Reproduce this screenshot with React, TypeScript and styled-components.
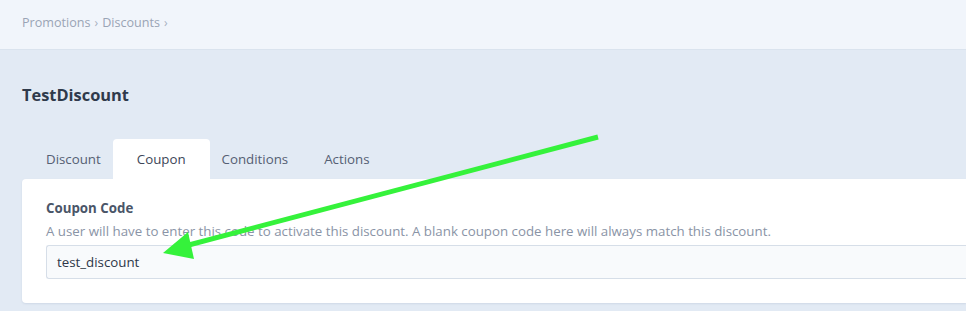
import React from "react";
import styled, { createGlobalStyle } from "styled-components";

const Global = createGlobalStyle`
  html, body { margin: 0; padding: 0; }
  body {
    font-family: "Open Sans", "Liberation Sans", sans-serif;
    background: #e2eaf4;
    overflow: hidden;
  }
`;

const Page = styled.div`
  position: relative;
  width: 966px;
  height: 311px;
  overflow: hidden;
  background: #e2eaf4;
`;

const Header = styled.header`
  height: 50px;
  box-sizing: border-box;
  background: #f1f5fb;
  border-bottom: 1px solid #dae3ee;
  display: flex;
  align-items: center;
  padding: 0 22px 4px;
`;

const Crumb = styled.span`
  font-size: 12.6px;
  color: #9aa4b5;
  display: inline-flex;
  align-items: center;
`;

const Sep = styled.span`
  font-size: 12px;
  color: #a7b0bf;
  margin: 0 4px;
`;

const Main = styled.main`
  padding: 33px 0 0 22px;
`;

const Title = styled.h1`
  margin: 0;
  font-size: 16.4px;
  font-weight: 700;
  color: #2f3a4b;
  line-height: 24px;
`;

const Tabs = styled.div`
  display: flex;
  margin-top: 32px;
  height: 40px;
`;

const Tab = styled.div<{ $active?: boolean; $first?: boolean }>`
  padding: 0 ${(p) => (p.$active ? "24px" : "18px")} 1px;
  margin: 0 ${(p) => (p.$active ? "-6px" : "0")} 0 ${(p) => (p.$first ? "6px" : p.$active ? "-6px" : "0")};
  display: flex;
  align-items: center;
  font-size: 13.3px;
  color: ${(p) => (p.$active ? "#3c4658" : "#556073")};
  background: ${(p) => (p.$active ? "#ffffff" : "transparent")};
  border-radius: 4px 4px 0 0;
  position: relative;
`;

const Card = styled.section`
  background: #ffffff;
  border-radius: 4px 0 0 4px;
  padding: 20px 0 24px 24px;
  box-shadow: 0 1px 2px rgba(120, 140, 170, 0.18);
`;

const Label = styled.div`
  font-size: 13.3px;
  font-weight: 700;
  color: #4a5568;
  line-height: 19px;
`;

const Help = styled.div`
  font-size: 13.3px;
  color: #8a94a6;
  line-height: 22px;
  margin-top: 2px;
`;

const Input = styled.div`
  margin-top: 3px;
  height: 34px;
  box-sizing: border-box;
  background: #f8fafc;
  border: 1px solid #d6dee8;
  border-right: none;
  border-radius: 3px 0 0 3px;
  display: flex;
  align-items: center;
  padding: 0 10px 1px;
  font-size: 13.3px;
  color: #2d3748;
`;

const Overlay = styled.svg`
  position: absolute;
  left: 0;
  top: 0;
  pointer-events: none;
`;

export default function App() {
  return (
    <Page>
      <Global />
      <Header>
        <Crumb>Promotions</Crumb>
        <Sep>›</Sep>
        <Crumb>Discounts</Crumb>
        <Sep>›</Sep>
      </Header>
      <Main>
        <Title>TestDiscount</Title>
        <Tabs>
          <Tab $first>Discount</Tab>
          <Tab $active>Coupon</Tab>
          <Tab>Conditions</Tab>
          <Tab>Actions</Tab>
        </Tabs>
        <Card>
          <Label>Coupon Code</Label>
          <Help>
            A user will have to enter this code to activate this discount. A blank coupon code here will always match this discount.
          </Help>
          <Input>test_discount</Input>
        </Card>
      </Main>
      <Overlay width="966" height="311" viewBox="0 0 966 311">
        <line x1="598" y1="137" x2="185" y2="246" stroke="#35f23b" strokeWidth="5" />
        <polygon points="163,253 188,232 194,259" fill="#35f23b" />
      </Overlay>
    </Page>
  );
}
